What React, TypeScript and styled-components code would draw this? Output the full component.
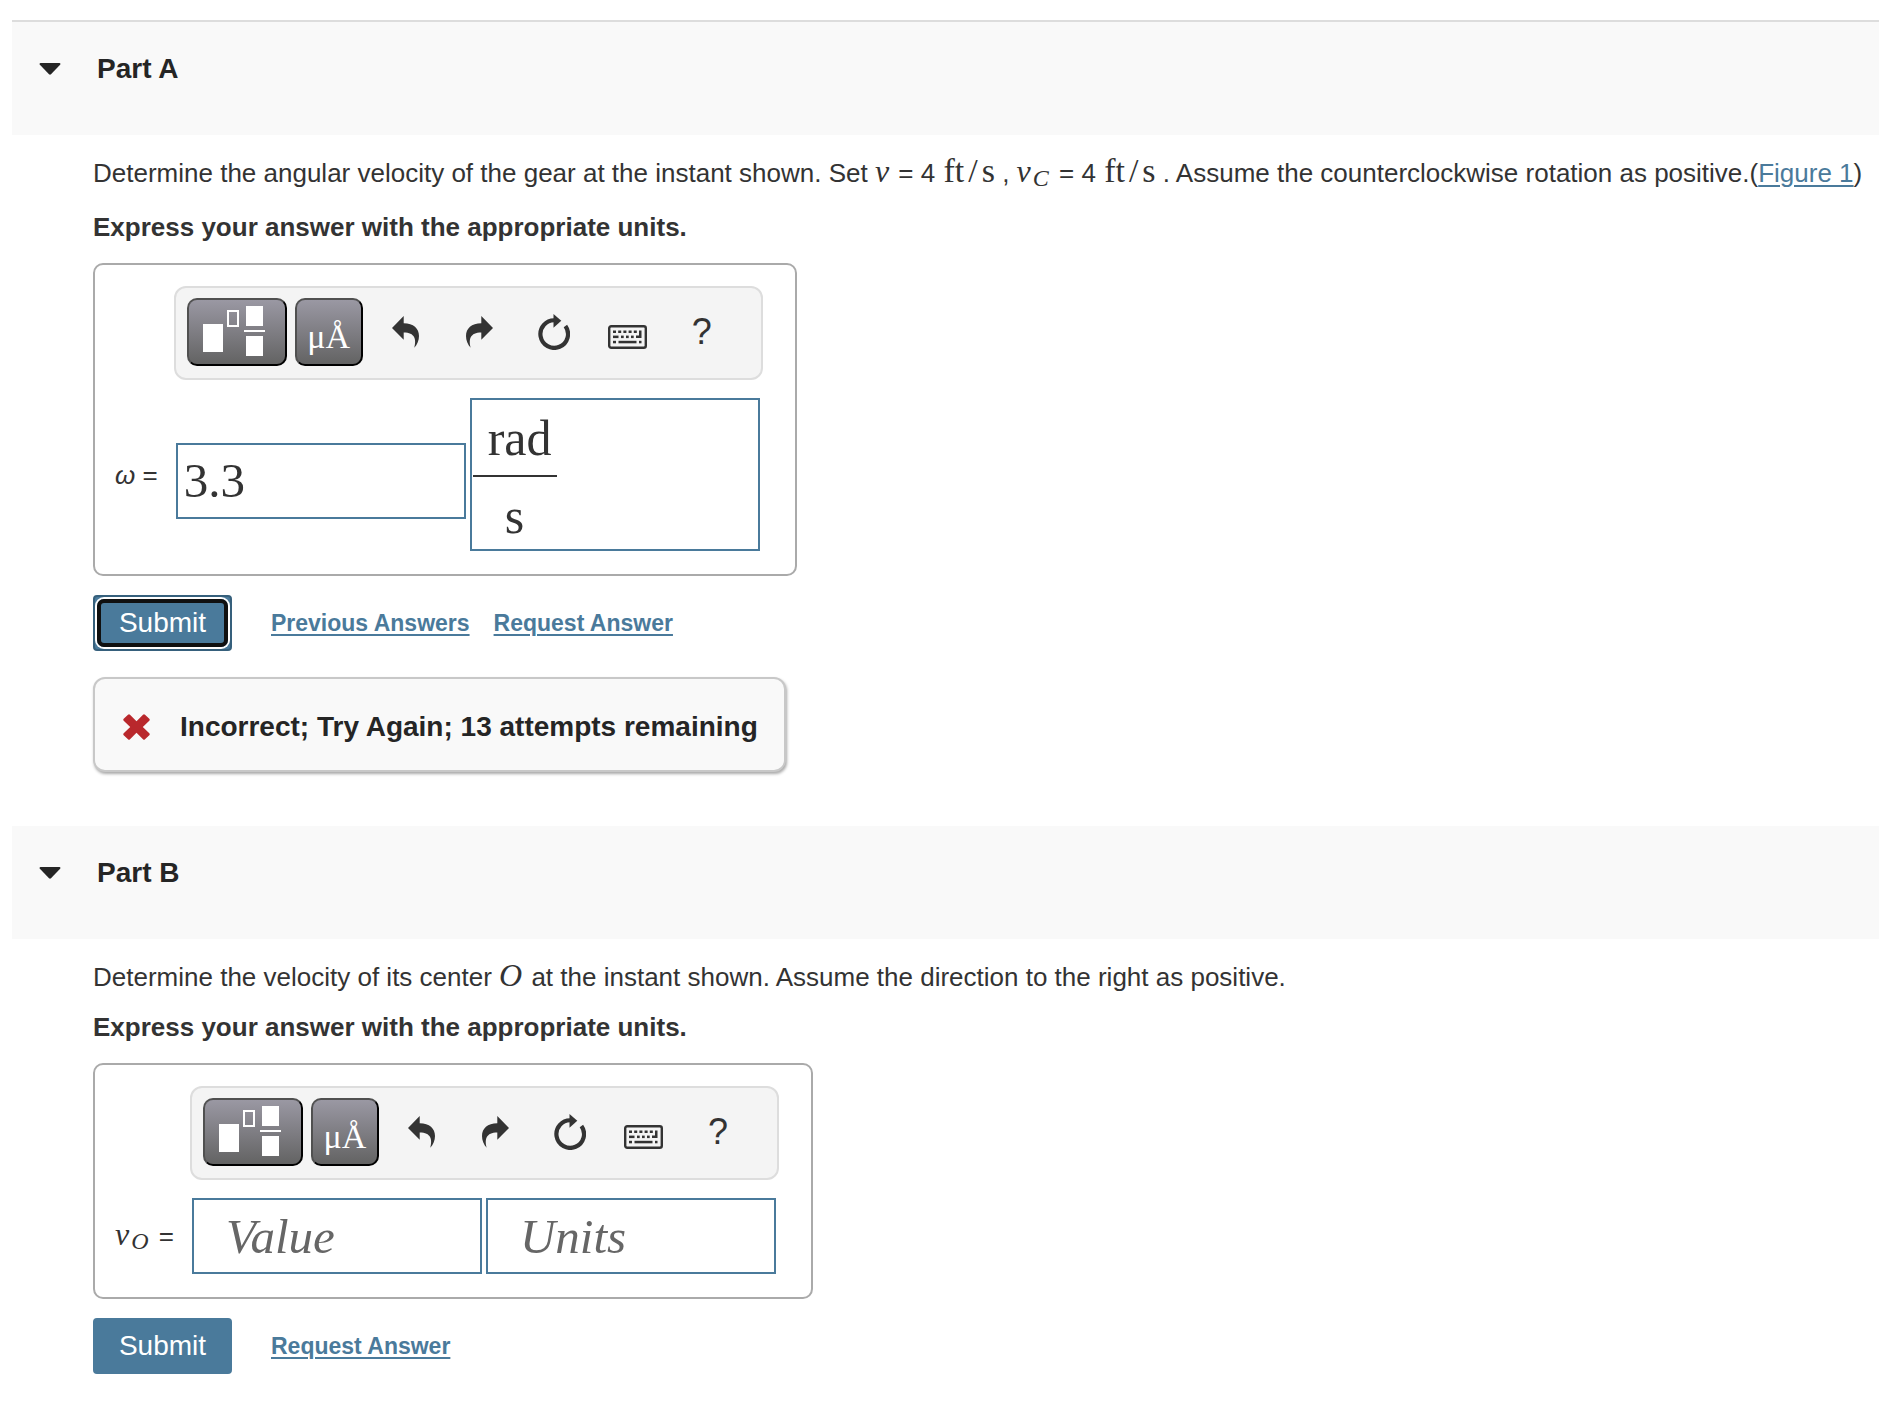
import React from "react";
import styled, { createGlobalStyle, css } from "styled-components";

const sans = `"Liberation Sans", Arial, Helvetica, sans-serif`;
const serif = `"Liberation Serif", "Times New Roman", Times, serif`;
const blue = "#4a7a9b";
const ink = "#333333";

const GlobalStyle = createGlobalStyle`
  *, *::before, *::after { box-sizing: border-box; }
  body { margin: 0; background: #fff; color: ${ink}; font-family: ${sans}; font-size: 26px; line-height: 30px; }
`;

const Page = styled.main`
  padding: 20px 0 27px 12px;
`;

const Section = styled.section<{ $ruled?: boolean }>`
  ${(p) => p.$ruled && css`border-top: 2px solid #dddddd;`}
`;

const PartHeader = styled.h2`
  margin: 0;
  padding: 31px 27px 50px;
  background: #f9f9f9;
  font-size: 28px;
  line-height: 32px;
  font-weight: bold;
`;

const Toggle = styled.button`
  display: flex;
  align-items: center;
  gap: 36px;
  padding: 0;
  border: 0;
  background: none;
  color: #252525;
  font: inherit;
`;

const Body = styled.div`
  display: flex;
  flex-direction: column;
  align-items: flex-start;
  padding: 23px 0 54px 81px;
`;

const Prompt = styled.p<{ $tall?: boolean }>`
  margin: 0 0 ${(p) => (p.$tall ? 24 : 20)}px;
`;

const Instruction = styled.p`
  margin: 0 0 21px;
  font-weight: bold;
`;

const Link = styled.a`
  color: ${blue};
  text-decoration: underline;
  text-decoration-thickness: 2px;
  text-underline-offset: 3px;
`;

const MathVar = styled.i`
  margin-right: 2px;
  font-family: ${serif};
  font-size: 32px;
  line-height: 0;
`;

const MathSub = styled.sub`
  margin-right: 3px;
  font-family: ${serif};
  font-style: italic;
  font-size: 24px;
  line-height: 0;
  vertical-align: -4px;
`;

const MathUnit = styled.span`
  margin-left: 1px;
  font-family: ${serif};
  font-size: 34px;
  line-height: 0;
`;

const Slash = styled.span`
  margin: 0 4px;
`;

const AnswerBox = styled.form`
  display: grid;
  grid-template-columns: auto auto;
  row-gap: 18px;
  padding: 21px 32px 23px 18px;
  border: 2px solid #aaaaaa;
  border-radius: 10px;
`;

const Toolbar = styled.div`
  grid-column: 2;
  display: flex;
  align-items: center;
  width: 589px;
  height: 94px;
  padding: 0 11px 2px;
  border: 2px solid #dddddd;
  border-radius: 12px;
  background: #f4f4f4;
`;

const DarkButton = styled.button<{ $wide?: boolean }>`
  display: flex;
  align-items: center;
  justify-content: center;
  width: ${(p) => (p.$wide ? 100 : 68)}px;
  height: 68px;
  margin-right: 8px;
  padding: ${(p) => (p.$wide ? 0 : 10)}px 0 0;
  border: 2px solid;
  border-color: #505050 #000 #000 #505050;
  border-radius: 10px;
  background: linear-gradient(#9a98a3, #636363);
  color: #fff;
  font: 34px/40px ${serif};
`;

const IconButton = styled.button<{ $low?: boolean }>`
  display: flex;
  align-items: center;
  justify-content: center;
  width: 70px;
  height: 68px;
  margin-right: 4px;
  padding: ${(p) => (p.$low ? 10 : 0)}px 0 0;
  border: 0;
  background: none;
  color: ${ink};
  font: 36px/40px ${sans};
`;

const Label = styled.label`
  align-self: center;
  padding: 0 16px 0 2px;
  white-space: pre;
`;

const Fields = styled.div`
  display: flex;
  align-items: center;
  gap: 4px;
  padding-left: 2px;
`;

const fieldFrame = css`
  width: 290px;
  border: 2px solid ${blue};
  border-radius: 0;
  background: #fff;
  color: ${ink};
  font-family: ${serif};
  font-size: 49px;
`;

const Field = styled.input<{ $besideFraction?: boolean }>`
  ${fieldFrame}
  height: 76px;
  margin-top: ${(p) => (p.$besideFraction ? 12 : 0)}px;
  padding: 0 6px;
  outline: 0;

  &::placeholder {
    color: #666666;
    font-style: italic;
    opacity: 1;
  }
  &:placeholder-shown {
    padding-left: 32px;
  }
`;

const FractionField = styled.div`
  ${fieldFrame}
  height: 153px;
  padding: 1px;
  font-size: 50px;
  outline: 0;
`;

const Fraction = styled.span`
  display: inline-flex;
  flex-direction: column;
  line-height: 74px;
  text-align: center;
`;

const Numerator = styled.span`
  padding: 0 5px 0 15px;
  border-bottom: 2px solid ${ink};
`;

const Denominator = styled.span`
  padding-top: 2px;
`;

const Actions = styled.div`
  display: flex;
  align-items: center;
  gap: 24px;
  margin-top: 19px;
  font-size: 23px;
  font-weight: bold;
`;

const Submit = styled.button<{ $focused?: boolean }>`
  position: relative;
  width: 139px;
  height: 56px;
  margin-right: 15px;
  padding: 0;
  border: 2px solid ${(p) => (p.$focused ? "#36607c" : blue)};
  border-radius: 4px;
  background: ${blue};
  color: #fff;
  font: 28px/32px ${sans};

  ${(p) =>
    p.$focused &&
    css`
      &::after {
        content: "";
        position: absolute;
        inset: 2px;
        border: 4px solid #101010;
        border-radius: 7px;
        box-shadow: 0 0 0 2px #fff;
      }
    `}
`;

const Feedback = styled.div`
  display: flex;
  align-items: center;
  gap: 30px;
  margin-top: 26px;
  height: 95px;
  padding: 5px 26px 0 28px;
  border: 2px solid #c8c8c8;
  border-radius: 12px;
  background: #f9f9f9;
  box-shadow: 1px 2px 3px #aaaaaa;
  color: #252525;
  font-size: 28px;
  line-height: 32px;
  font-weight: bold;
`;

const Caret = () => (
  <svg width="22" height="12" viewBox="0 0 22 12" aria-hidden="true">
    <path d="M1.6 0h18.8q1.6.3.7 1.8L12 11.2q-1 .9-2 0L.9 1.8Q0 .3 1.6 0z" fill="currentColor" />
  </svg>
);

const TemplateIcon = () => (
  <svg width="96" height="64" viewBox="2 2 96 64" aria-hidden="true">
    <g fill="#fff">
      <rect x="16" y="26" width="20" height="28" />
      <rect x="59" y="8" width="17" height="20" />
      <rect x="57" y="32" width="21" height="2" />
      <rect x="59" y="38" width="17" height="20" />
    </g>
    <rect x="41" y="13" width="10" height="15" fill="none" stroke="#fff" strokeWidth="2" />
  </svg>
);

const TurnArrow = ({ flip }: { flip?: boolean }) => (
  <svg width="27" height="32" viewBox="0 0 27 32" aria-hidden="true">
    <path
      transform={flip ? "matrix(-1 0 0 1 27 0)" : undefined}
      d="M0 12 11.7 0v7.3C21.5 7.3 27 12.5 27 20c0 4.500-1.700 8.500-4.700 11.700C24.500 23.500 23 16.500 11.700 16.500v7.300z"
      fill="currentColor"
    />
  </svg>
);

const ResetIcon = () => (
  <svg width="32" height="36" viewBox="0 0 32 36" aria-hidden="true">
    <path d="M17 6.300A13.800 13.800 0 1 0 27.400 12" fill="none" stroke="currentColor" strokeWidth="4.200" />
    <path d="M15.500 0 23.300 6.700 15.500 13.700z" fill="currentColor" />
  </svg>
);

const KeyboardIcon = () => (
  <svg width="39" height="24" viewBox="0 0 39 24" aria-hidden="true">
    <rect x="1.200" y="1.200" width="36.600" height="21.600" rx="2" fill="none" stroke="currentColor" strokeWidth="2.400" />
    <g fill="currentColor">
      {[5, 10.2, 15.4, 20.6, 25.8].map((x) => (
        <rect key={x} x={x} y="5.500" width="3" height="2.500" />
      ))}
      <path d="M31 5.500h2.500V13H28v-2.500h3z" />
      <rect x="5" y="10.600" width="5.500" height="2.500" />
      {[13, 18, 23].map((x) => (
        <rect key={x} x={x} y="10.600" width="2.700" height="2.500" />
      ))}
      <rect x="5" y="15.800" width="3" height="2.500" />
      <rect x="10.500" y="15.800" width="18" height="2.500" />
      <rect x="31" y="15.800" width="2.500" height="2.500" />
    </g>
  </svg>
);

const CrossIcon = () => (
  <svg width="27" height="26" viewBox="0 0 27 26" aria-hidden="true">
    <path
      d="M5 .7Q6 -.3 7 .7L13.500 7.200 20 .7Q21 -.3 22 .7L26.300 4.700Q27.200 5.700 26.300 6.700L19.800 13 26.300 19.300Q27.200 20.300 26.300 21.300L22 25.300Q21 26.300 20 25.300L13.500 18.800 7 25.300Q6 26.300 5 25.300L.7 21.300Q-.2 20.300.7 19.300L7.200 13 .7 6.700Q-.2 5.700.7 4.700z"
      fill="#b9282c"
    />
  </svg>
);

const MathToolbar = () => (
  <Toolbar role="toolbar" aria-label="Math tools">
    <DarkButton type="button" $wide aria-label="Templates">
      <TemplateIcon />
    </DarkButton>
    <DarkButton type="button">μÅ</DarkButton>
    <IconButton type="button" aria-label="Undo"><TurnArrow /></IconButton>
    <IconButton type="button" aria-label="Redo"><TurnArrow flip /></IconButton>
    <IconButton type="button" aria-label="Reset"><ResetIcon /></IconButton>
    <IconButton type="button" $low aria-label="Keyboard shortcuts"><KeyboardIcon /></IconButton>
    <IconButton type="button">?</IconButton>
  </Toolbar>
);

const PartTitle = ({ children }: { children: React.ReactNode }) => (
  <PartHeader>
    <Toggle type="button" aria-expanded="true">
      <Caret />
      {children}
    </Toggle>
  </PartHeader>
);

const FeetPerSecond = () => (
  <MathUnit>ft<Slash>/</Slash>s</MathUnit>
);

export default function App() {
  return (
    <>
      <GlobalStyle />
      <Page>
        <Section $ruled>
          <PartTitle>Part A</PartTitle>
          <Body>
            <Prompt $tall>
              Determine the angular velocity of the gear at the instant shown. Set <MathVar>v</MathVar> = 4{" "}
              <FeetPerSecond /> , <MathVar>v</MathVar>
              <MathSub>C</MathSub> = 4 <FeetPerSecond /> . Assume the counterclockwise rotation as positive.(
              <Link href="#figure-1">Figure 1</Link>)
            </Prompt>
            <Instruction>Express your answer with the appropriate units.</Instruction>
            <AnswerBox id="answer-a" onSubmit={(e) => e.preventDefault()}>
              <MathToolbar />
              <Label htmlFor="omega"><i>ω</i> =</Label>
              <Fields>
                <Field id="omega" defaultValue="3.3" $besideFraction />
                <FractionField role="textbox" aria-label="Units" contentEditable suppressContentEditableWarning>
                  <Fraction>
                    <Numerator>rad</Numerator>
                    <Denominator>s</Denominator>
                  </Fraction>
                </FractionField>
              </Fields>
            </AnswerBox>
            <Actions>
              <Submit form="answer-a" $focused>Submit</Submit>
              <Link href="#previous">Previous Answers</Link>
              <Link href="#request-a">Request Answer</Link>
            </Actions>
            <Feedback role="status">
              <CrossIcon />
              Incorrect; Try Again; 13 attempts remaining
            </Feedback>
          </Body>
        </Section>
        <Section>
          <PartTitle>Part B</PartTitle>
          <Body>
            <Prompt>
              Determine the velocity of its center <MathVar>O</MathVar> at the instant shown. Assume the direction to
              the right as positive.
            </Prompt>
            <Instruction>Express your answer with the appropriate units.</Instruction>
            <AnswerBox id="answer-b" onSubmit={(e) => e.preventDefault()}>
              <MathToolbar />
              <Label htmlFor="velocity"><MathVar>v</MathVar><MathSub>O</MathSub> =</Label>
              <Fields>
                <Field id="velocity" placeholder="Value" />
                <Field aria-label="Units" placeholder="Units" />
              </Fields>
            </AnswerBox>
            <Actions>
              <Submit form="answer-b">Submit</Submit>
              <Link href="#request-b">Request Answer</Link>
            </Actions>
          </Body>
        </Section>
      </Page>
    </>
  );
}
